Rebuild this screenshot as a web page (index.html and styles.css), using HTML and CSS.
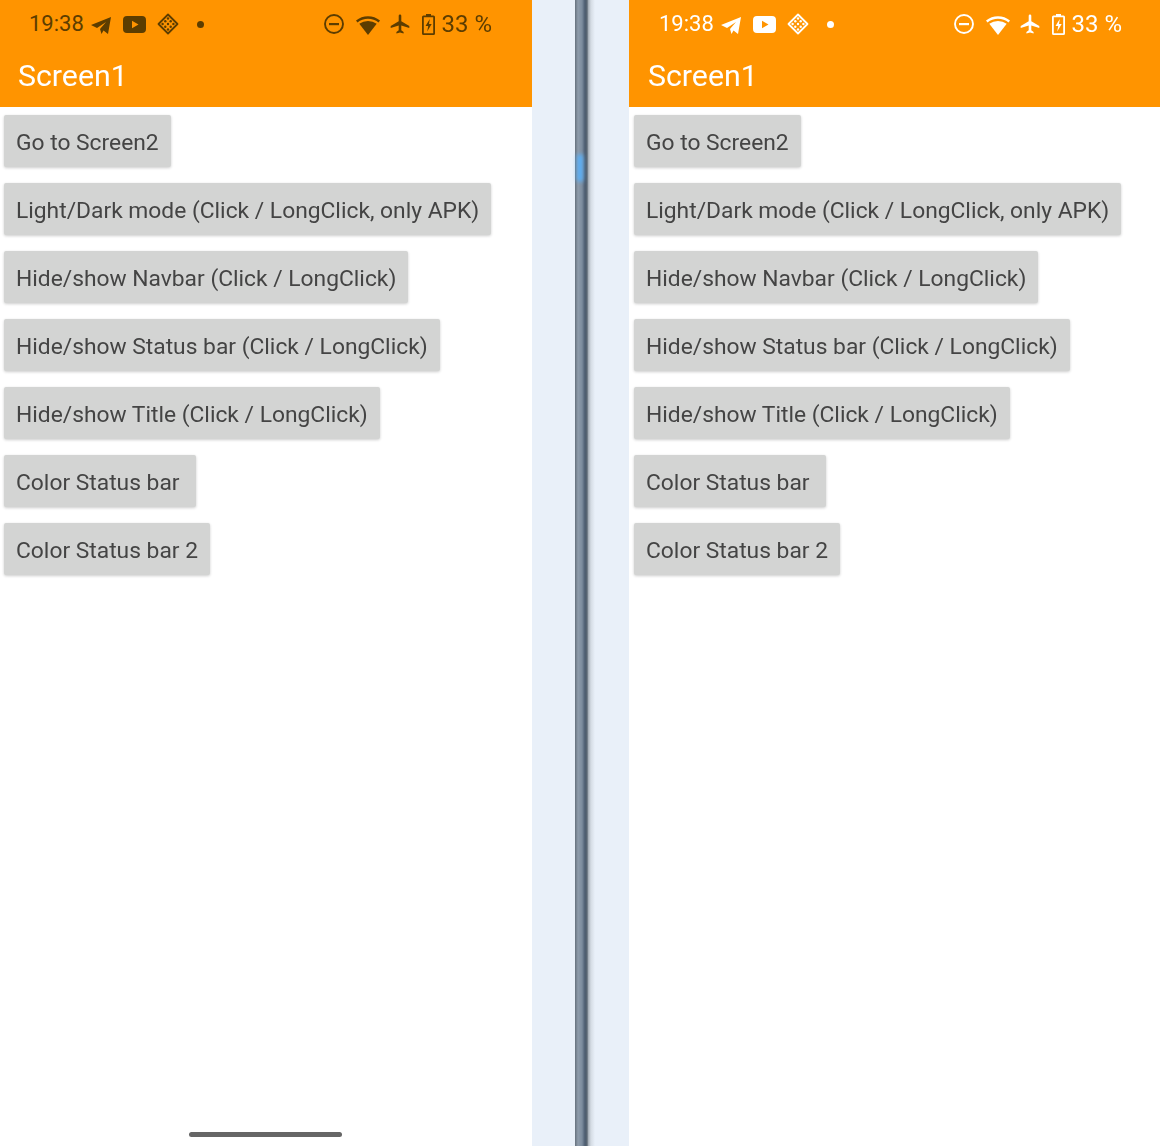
FILE: index.html
```html
<!DOCTYPE html>
<html lang="en">
<head>
<meta charset="utf-8">
<title>Screen1</title>
<link rel="stylesheet" href="styles.css">
</head>
<body>
<svg class="defs" aria-hidden="true">
  <symbol id="i-telegram" viewBox="0 0 20 17"><path d="M20 0 0 8l6 3 9-6-6 7 1.500 5 2-3.500L17 17z" fill="currentColor"/></symbol>
  <symbol id="i-youtube" viewBox="0 0 23 17"><path fill-rule="evenodd" d="M4 0h15a4 4 0 0 1 4 4v9a4 4 0 0 1-4 4H4a4 4 0 0 1-4-4V4a4 4 0 0 1 4-4zM9 4.800v7.400L15.500 8.500z" fill="currentColor"/></symbol>
  <symbol id="i-diamond" viewBox="0 0 22 22"><path d="M11 1.500 20.500 11 11 20.500 1.500 11z" fill="none" stroke="currentColor" stroke-width="1.800" stroke-linejoin="round"/><g fill="currentColor"><circle cx="11" cy="5.500" r="1.200"/><circle cx="8.300" cy="8.200" r="1.200"/><circle cx="13.700" cy="8.200" r="1.200"/><circle cx="5.600" cy="11" r="1.200"/><circle cx="11" cy="11" r="1.200"/><circle cx="16.400" cy="11" r="1.200"/><circle cx="8.300" cy="13.800" r="1.200"/><circle cx="13.700" cy="13.800" r="1.200"/><circle cx="11" cy="16.500" r="1.200"/></g></symbol>
  <symbol id="i-dnd" viewBox="0 0 20 20"><circle cx="10" cy="10" r="9" fill="none" stroke="currentColor" stroke-width="1.900"/><rect x="5" y="9" width="10" height="2.200" fill="currentColor"/></symbol>
  <symbol id="i-wifi" viewBox="0 0 24 21"><path d="M0 6.500A19 19 0 0 1 24 6.500L22.500 8.500A17 17 0 0 0 1.500 8.500z" fill="currentColor"/><path d="M3.300 9.800A14.500 14.500 0 0 1 20.700 9.800L12 21z" fill="currentColor"/></symbol>
  <symbol id="i-plane" viewBox="0 0 20 20"><path d="M8.700 1.700a1.300 1.300 0 0 1 2.600 0v5.600l8 4.700v2l-8-2.500v4.700l2.300 1.700V19.500L10 18.500l-3.600 1V17.900l2.300-1.700v-4.700l-8 2.500v-2l8-4.700z" fill="currentColor"/></symbol>
  <symbol id="i-battery" viewBox="0 0 13 21"><path fill-rule="evenodd" d="M4 0h5v1.500h2.500A1.500 1.500 0 0 1 13 3v16.500a1.500 1.500 0 0 1-1.500 1.500h-10A1.500 1.500 0 0 1 0 19.500V3a1.500 1.500 0 0 1 1.500-1.500H4zM1.800 3.300v15.900h9.400V3.300z" fill="currentColor"/><path d="M7.800 5 3.500 12h2.700L5.200 17.500 9.700 10H7z" fill="currentColor"/></symbol>
</svg>

<main class="device">
  <section class="panel panel-dark">
    <header class="appbar">
      <div class="status">
        <span class="clock">19:38</span>
        <svg class="ic telegram"><use href="#i-telegram"/></svg>
        <svg class="ic youtube"><use href="#i-youtube"/></svg>
        <svg class="ic diamond"><use href="#i-diamond"/></svg>
        <span class="dot"></span>
        <span class="spacer"></span>
        <svg class="ic dnd"><use href="#i-dnd"/></svg>
        <svg class="ic wifi"><use href="#i-wifi"/></svg>
        <svg class="ic plane"><use href="#i-plane"/></svg>
        <svg class="ic battery"><use href="#i-battery"/></svg>
        <span class="percent">33 %</span>
      </div>
      <h1 class="title">Screen1</h1>
    </header>
    <div class="buttons">
      <button class="btn">Go to Screen2</button>
      <button class="btn">Light/Dark mode (Click / LongClick, only APK)</button>
      <button class="btn">Hide/show Navbar (Click / LongClick)</button>
      <button class="btn">Hide/show Status bar (Click / LongClick)</button>
      <button class="btn">Hide/show Title (Click / LongClick)</button>
      <button class="btn btn-wide">Color Status bar</button>
      <button class="btn">Color Status bar 2</button>
    </div>
    <div class="homebar"></div>
  </section>

  <div class="hinge">
    <div class="hinge-strip"><span class="hinge-glow"></span></div>
  </div>

  <section class="panel panel-light">
    <header class="appbar">
      <div class="status">
        <span class="clock">19:38</span>
        <svg class="ic telegram"><use href="#i-telegram"/></svg>
        <svg class="ic youtube"><use href="#i-youtube"/></svg>
        <svg class="ic diamond"><use href="#i-diamond"/></svg>
        <span class="dot"></span>
        <span class="spacer"></span>
        <svg class="ic dnd"><use href="#i-dnd"/></svg>
        <svg class="ic wifi"><use href="#i-wifi"/></svg>
        <svg class="ic plane"><use href="#i-plane"/></svg>
        <svg class="ic battery"><use href="#i-battery"/></svg>
        <span class="percent">33 %</span>
      </div>
      <h1 class="title">Screen1</h1>
    </header>
    <div class="buttons">
      <button class="btn">Go to Screen2</button>
      <button class="btn">Light/Dark mode (Click / LongClick, only APK)</button>
      <button class="btn">Hide/show Navbar (Click / LongClick)</button>
      <button class="btn">Hide/show Status bar (Click / LongClick)</button>
      <button class="btn">Hide/show Title (Click / LongClick)</button>
      <button class="btn btn-wide">Color Status bar</button>
      <button class="btn">Color Status bar 2</button>
    </div>
  </section>
</main>
</body>
</html>
```
FILE: styles.css
```css
* { box-sizing: border-box; }
html, body { margin: 0; padding: 0; height: 100%; background: #fff; overflow: hidden; }
body { font-family: Roboto, "Liberation Sans", sans-serif; }
.defs { display: none; }

.device { display: flex; width: 1160px; height: 1146px; filter: blur(.35px); }

.panel { display: flex; flex-direction: column; height: 100%; background: #fff; }
.panel-dark { width: 532px; --status: #5c3d00; --inset: 0px; --right: 40px; }
.panel-light { width: 531px; --status: #fff; --inset: 1px; --right: 38px; }

.appbar { height: 107px; background: #ff9400; padding-left: var(--inset); }

.status {
  display: flex;
  align-items: center;
  height: 48px;
  padding: 0 var(--right) 0 29px;
  color: var(--status);
  font-size: 22px;
  line-height: 48px;
}
.spacer { flex: 1; }
.ic { display: block; flex: none; }
.telegram { width: 20px; height: 17px; margin-left: 7px; margin-top: 2px; }
.youtube { width: 23px; height: 17px; margin-left: 12px; }
.diamond { width: 22px; height: 22px; margin-left: 11px; }
.dot { width: 7px; height: 7px; margin-left: 18px; border-radius: 50%; background: currentColor; }
.dnd { width: 20px; height: 20px; }
.wifi { width: 24px; height: 21px; margin-left: 12px; }
.plane { width: 20px; height: 20px; margin-left: 10px; }
.battery { width: 13px; height: 21px; margin-left: 12px; }
.percent { margin-left: 6px; font-size: 24px; }

.title {
  margin: 8px 0 0;
  padding-left: 18px;
  font-size: 30.300px;
  font-weight: 400;
  line-height: 40px;
  color: #fff;
}

.buttons {
  display: flex;
  flex-direction: column;
  align-items: flex-start;
  gap: 16px;
  padding: 8px 0 0 calc(4px + var(--inset));
}
.btn {
  height: 52px;
  padding: 3px 12px 0;
  border: 0;
  border-radius: 2px;
  background: #d3d4d3;
  box-shadow: 0 1px 3px rgba(0, 0, 0, .2);
  color: #444;
  font-family: inherit;
  font-size: 22.800px;
  line-height: 48px;
  text-align: left;
  white-space: nowrap;
}
.btn-wide { min-width: 192px; }

.homebar {
  align-self: center;
  width: 153px;
  height: 5px;
  margin: auto 1px 9px 0;
  border-radius: 3px;
  background: #666;
}

.hinge {
  display: flex;
  width: 97px;
  height: 100%;
  padding-left: 43px;
  background: #e9f0f9;
}
.hinge-strip {
  position: relative;
  width: 20px;
  height: 100%;
  background: linear-gradient(90deg, #66717d 0, #8f9cab 15%, #7c8c9e 35%, #4c5c70 50%, #596571 60%, #aeb6bf 68%, #d5dce4 80%, #e9f0f9 100%);
}
.hinge-glow {
  position: absolute;
  left: 2px;
  top: 154px;
  width: 6px;
  height: 28px;
  border-radius: 3px;
  background: #58b0fa;
  filter: blur(2px);
}
```
